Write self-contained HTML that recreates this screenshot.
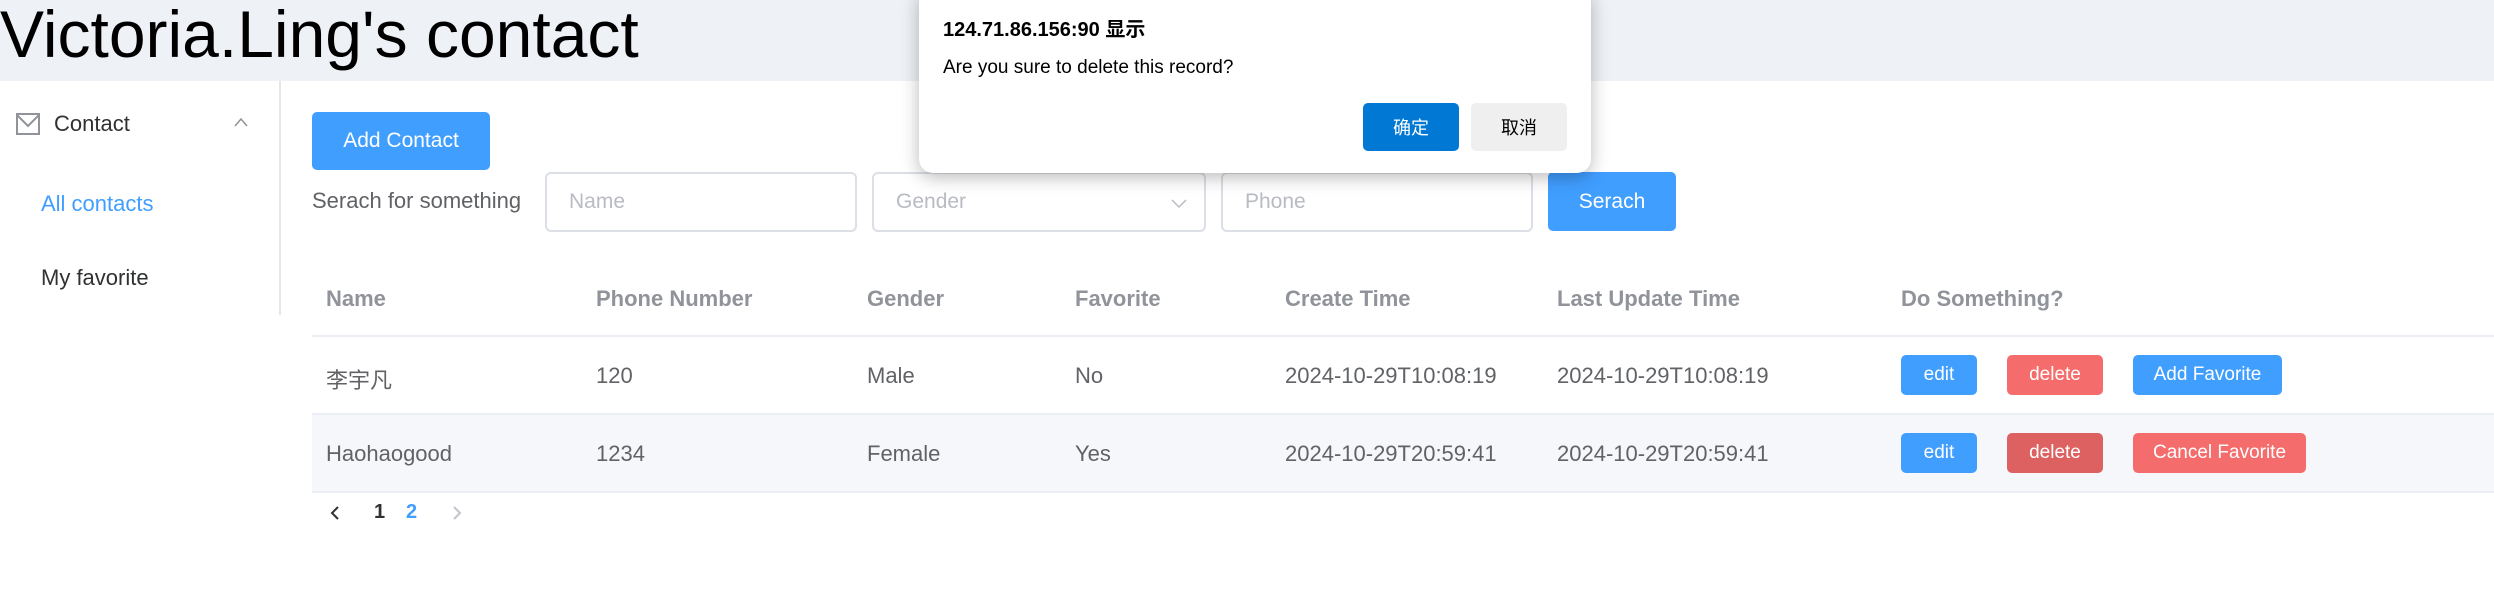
<!DOCTYPE html>
<html><head><meta charset="utf-8"><style>
*{margin:0;padding:0;box-sizing:border-box}
body{width:2494px;height:595px;background:#fff;font-family:"Liberation Sans","Noto Sans CJK SC",sans-serif;position:relative;overflow:hidden;color:#606266}
.a{position:absolute}
.hdr{left:0;top:0;width:2494px;height:81px;background:#eef1f6}
.title{left:0;top:-4px;font-size:66px;color:#000;white-space:nowrap}
.side{left:279px;top:81px;width:2px;height:234px;background:#e6e6e6}
.btn{position:absolute;border-radius:5px;color:#fff;display:flex;align-items:center;justify-content:center;font-size:20px}
.inp{position:absolute;border:2px solid #dcdfe6;border-radius:6px;background:#fff;color:#b8bbc2;font-size:21px;display:flex;align-items:center;padding-left:22px}
.th{position:absolute;top:286px;font-size:22px;font-weight:bold;color:#909399}
.td{position:absolute;font-size:22px;color:#606266}
.line{position:absolute;left:312px;width:2182px;height:2px;background:#ebeef5}
</style></head><body>
<div class="a hdr"></div>
<div class="a title">Victoria.Ling's contact</div>
<div class="a side"></div>
<svg class="a" style="left:16px;top:113px" width="26" height="24" viewBox="0 0 26 24"><rect x="1" y="1" width="22" height="20" fill="none" stroke="#909399" stroke-width="2"/><path d="M1 2 L12 13 L23 2" fill="none" stroke="#909399" stroke-width="2"/></svg>
<div class="a" style="left:54px;top:111px;font-size:22px;color:#303133">Contact</div>
<svg class="a" style="left:233px;top:116px" width="16" height="12"><path d="M2 10 L8 3 L14 10" fill="none" stroke="#909399" stroke-width="1.5"/></svg>
<div class="a" style="left:41px;top:191px;font-size:22px;color:#409eff">All contacts</div>
<div class="a" style="left:41px;top:265px;font-size:22px;color:#303133">My favorite</div>

<div class="btn" style="left:312px;top:112px;width:178px;height:58px;background:#409eff;font-size:21px">Add Contact</div>
<div class="a" style="left:312px;top:188px;font-size:22px;color:#606266">Serach for something</div>
<div class="inp" style="left:545px;top:172px;width:312px;height:60px">Name</div>
<div class="inp" style="left:872px;top:172px;width:334px;height:60px">Gender<svg style="position:absolute;right:16px;top:24px" width="18" height="12"><path d="M2 2 L9 9 L16 2" fill="none" stroke="#b8bbc2" stroke-width="1.5"/></svg></div>
<div class="inp" style="left:1221px;top:172px;width:312px;height:60px">Phone</div>
<div class="btn" style="left:1548px;top:172px;width:128px;height:59px;background:#409eff;font-size:21px">Serach</div>

<div class="th" style="left:326px">Name</div>
<div class="th" style="left:596px">Phone Number</div>
<div class="th" style="left:867px">Gender</div>
<div class="th" style="left:1075px">Favorite</div>
<div class="th" style="left:1285px">Create Time</div>
<div class="th" style="left:1557px">Last Update Time</div>
<div class="th" style="left:1901px">Do Something?</div>
<div class="line" style="top:335px"></div>
<div class="a" style="left:312px;top:415px;width:2182px;height:77px;background:#f5f7fa"></div>
<div class="line" style="top:413px"></div>
<div class="line" style="top:491px"></div>

<div class="td" style="left:326px;top:363px">李宇凡</div>
<div class="td" style="left:596px;top:363px">120</div>
<div class="td" style="left:867px;top:363px">Male</div>
<div class="td" style="left:1075px;top:363px">No</div>
<div class="td" style="left:1285px;top:363px">2024-10-29T10:08:19</div>
<div class="td" style="left:1557px;top:363px">2024-10-29T10:08:19</div>
<div class="btn" style="left:1901px;top:355px;width:76px;height:40px;background:#409eff;font-size:19px">edit</div>
<div class="btn" style="left:2007px;top:355px;width:96px;height:40px;background:#f56c6c;font-size:19px">delete</div>
<div class="btn" style="left:2133px;top:355px;width:149px;height:40px;background:#409eff;font-size:19px">Add Favorite</div>

<div class="td" style="left:326px;top:441px">Haohaogood</div>
<div class="td" style="left:596px;top:441px">1234</div>
<div class="td" style="left:867px;top:441px">Female</div>
<div class="td" style="left:1075px;top:441px">Yes</div>
<div class="td" style="left:1285px;top:441px">2024-10-29T20:59:41</div>
<div class="td" style="left:1557px;top:441px">2024-10-29T20:59:41</div>
<div class="btn" style="left:1901px;top:433px;width:76px;height:40px;background:#409eff;font-size:19px">edit</div>
<div class="btn" style="left:2007px;top:433px;width:96px;height:40px;background:#dd6161;font-size:19px">delete</div>
<div class="btn" style="left:2133px;top:433px;width:173px;height:40px;background:#f56c6c;font-size:19px">Cancel Favorite</div>

<svg class="a" style="left:329px;top:505px" width="12" height="16"><path d="M9 2 L3 8 L9 14" fill="none" stroke="#303133" stroke-width="2"/></svg>
<div class="a" style="left:374px;top:501px;font-size:20px;font-weight:bold;color:#303133">1</div>
<div class="a" style="left:406px;top:501px;font-size:20px;font-weight:bold;color:#409eff">2</div>
<svg class="a" style="left:451px;top:505px" width="12" height="16"><path d="M3 2 L9 8 L3 14" fill="none" stroke="#c0c4cc" stroke-width="2"/></svg>

<div class="a" style="left:919px;top:-12px;width:672px;height:185px;background:#fff;border-radius:14px;box-shadow:0 4px 18px rgba(0,0,0,0.28)"></div>
<div class="a" style="left:943px;top:13px;font-size:20px;font-weight:bold;color:#000">124.71.86.156:90 显示</div>
<div class="a" style="left:943px;top:57px;font-size:19px;color:#000">Are you sure to delete this record?</div>
<div class="btn" style="left:1363px;top:103px;width:96px;height:48px;background:#0078d4;color:#fff;font-size:18px">确定</div>
<div class="btn" style="left:1471px;top:103px;width:96px;height:48px;background:#efefef;color:#000;font-size:18px">取消</div>
</body></html>
